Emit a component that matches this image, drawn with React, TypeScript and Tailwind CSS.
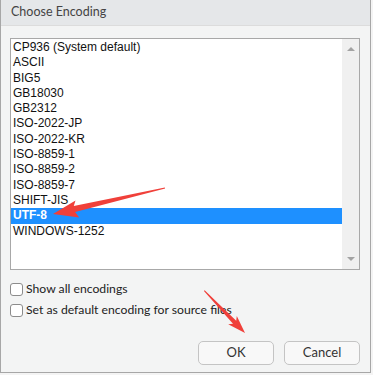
const encodings = [
  'CP936 (System default)',
  'ASCII',
  'BIG5',
  'GB18030',
  'GB2312',
  'ISO-2022-JP',
  'ISO-2022-KR',
  'ISO-8859-1',
  'ISO-8859-2',
  'ISO-8859-7',
  'SHIFT-JIS',
  'UTF-8',
  'WINDOWS-1252',
];

function Checkbox({ label }: { label: string }) {
  return (
    <label className="flex items-center h-[21px]">
      <span className="w-[13px] h-[13px] rounded-[3px] border border-[#8c8c8c] bg-white shrink-0" />
      <span className="ml-[3px] text-[12.2px] text-[#222]">{label}</span>
    </label>
  );
}

function Button({ label }: { label: string }) {
  return (
    <button className="w-[76px] h-[24px] rounded-[5px] border border-[#c4c4c4] bg-[#f8f8f8] text-[13px] text-[#333]">
      {label}
    </button>
  );
}

export default function App() {
  return (
    <div className="relative w-[373px] h-[375px] bg-[#f4f4f4] overflow-hidden" style={{ fontFamily: 'Lato, "Noto Sans", sans-serif' }}>
      <div className="w-[371px] h-[373px] border-x border-b border-[#a7a7a7] bg-[#f3f4f4] flex flex-col">
        <div className="h-[26px] bg-[#e5e7e9] border-b border-[#dcdcdc] flex items-center pl-[10px] text-[12.5px] text-[#444]">
          Choose Encoding
        </div>
        <div className="px-[9px] pt-[12px]">
          <div className="w-[350px] h-[232px] border border-[#a8a8a8] bg-white flex" style={{ fontFamily: '"Liberation Sans", Arial, sans-serif' }}>
            <div className="flex-1 flex flex-col pt-[1px]">
              {encodings.map((e) => (
                <div
                  key={e}
                  className={
                    e === 'UTF-8'
                      ? 'h-[15.3px] leading-[15.3px] pl-[2px] text-[12px] font-bold text-white bg-[#1e90ff]'
                      : 'h-[15.3px] leading-[15.3px] pl-[2px] text-[12px] text-[#111]'
                  }
                >
                  {e}
                </div>
              ))}
            </div>
            <div className="w-[17px] bg-[#f0f0f0] flex flex-col items-center justify-between py-[8px]">
              <svg width="8" height="4" viewBox="0 0 8 4">
                <polygon points="0,4 4,0 8,4" fill="#a3a3a3" />
              </svg>
              <svg width="8" height="4" viewBox="0 0 8 4">
                <polygon points="0,0 8,0 4,4" fill="#a3a3a3" />
              </svg>
            </div>
          </div>
          <div className="mt-[9px] flex flex-col">
            <Checkbox label="Show all encodings" />
            <Checkbox label="Set as default encoding for source files" />
          </div>
          <div className="mt-[20px] flex justify-end gap-[10px] pr-[1px]">
            <Button label="OK" />
            <Button label="Cancel" />
          </div>
        </div>
      </div>
      <svg className="absolute left-0 top-0 pointer-events-none" width="373" height="375" viewBox="0 0 373 375">
        <polygon
          points="53,214 79.2,217.5 75.1,212 165.14,188.58 164.86,187.42 73.75,206.1 75.5,200.6"
          fill="#f0403a"
        />
        <polygon
          points="245,333 228.2,324.2 233,323.7 203.94,291.05 204.66,290.35 236.2,320.7 236.8,315.9"
          fill="#f0403a"
        />
      </svg>
    </div>
  );
}
